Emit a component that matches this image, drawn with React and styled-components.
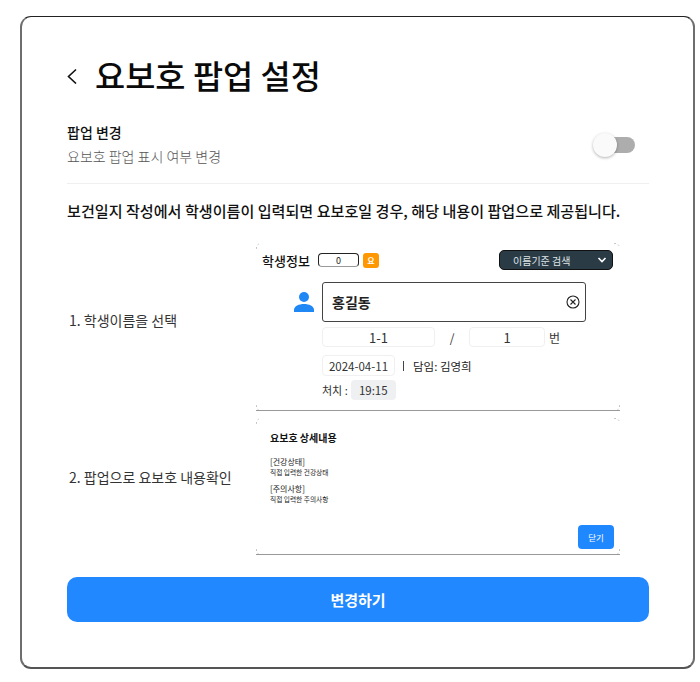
import React from "react";
import styled, { createGlobalStyle } from "styled-components";

const Global = createGlobalStyle`
  html, body { margin: 0; padding: 0; background: #fff; }
  body { font-family: "Noto Sans CJK KR", "Noto Sans", sans-serif; color: #111; }
`;

const Page = styled.div`
  width: 700px;
  height: 682px;
  padding: 16px 5px 13px 20px;
  box-sizing: border-box;
`;
const Card = styled.main`
  height: 100%;
  box-sizing: border-box;
  border: 1px solid #222;
  border-left: 2px solid #6e6e6e;
  border-right: 2px solid #6e6e6e;
  border-bottom: 2px solid #555;
  border-radius: 11px;
  padding: 34px 44px 0 45px;
  display: flex;
  flex-direction: column;
`;
const Header = styled.header`
  display: flex;
  align-items: center;
  height: 48px;
  gap: 17px;
`;
const BackIcon = styled.svg`
  width: 11px;
  height: 18px;
  fill: none;
  stroke: #111;
  stroke-width: 1.6;
`;
const Title = styled.h1`
  margin: 0;
  font-size: 32.8px;
  line-height: 48px;
  font-weight: 500;
  color: #0a0a0a;
`;
const ToggleRow = styled.section`
  display: flex;
  align-items: center;
  justify-content: space-between;
  margin-top: 22px;
  height: 45px;
`;
const ToggleText = styled.div`
  display: flex;
  flex-direction: column;
  gap: 4px;
`;
const ToggleTitle = styled.div`
  font-size: 14px;
  line-height: 20px;
  font-weight: 500;
  color: #111;
`;
const ToggleSub = styled.div`
  font-size: 14px;
  line-height: 20px;
  font-weight: 300;
  color: #555;
`;
const Switch = styled.div`
  position: relative;
  width: 37px;
  height: 16px;
  margin: 3px 14px 0 0;
  border-radius: 8px;
  background: #adadad;
`;
const Thumb = styled.span`
  position: absolute;
  left: -5px;
  top: -4px;
  width: 24px;
  height: 24px;
  border-radius: 50%;
  background: #fafafa;
  box-shadow: 0 1px 3px rgba(0, 0, 0, 0.3);
`;
const Divider = styled.hr`
  margin: 17px 0 0;
  border: 0;
  height: 1px;
  background: #efefef;
`;
const Notice = styled.p`
  margin: 15px 0 0;
  font-size: 15.1px;
  line-height: 23px;
  font-weight: 500;
  white-space: nowrap;
  color: #111;
`;
const GuideRow = styled.section`
  display: grid;
  grid-template-columns: 189px 364px;
  align-items: center;
  margin-top: ${(p) => p.$top}px;
`;
const GuideLabel = styled.div`
  font-size: 14px;
  line-height: 20px;
  font-weight: 400;
  color: #333;
  padding-left: 2px;
  padding-bottom: ${(p) => p.$pb}px;
`;
const Preview = styled.div`
  position: relative;
  height: ${(p) => p.$h}px;
  box-sizing: border-box;
  border-bottom: 1px solid #999;
`;
const Corner = styled.svg`
  position: absolute;
  width: 6px;
  height: 6px;
  fill: none;
  stroke: #999;
  stroke-width: 1;
  stroke-dasharray: 1 3;
  ${(p) => (p.$top ? "top: 0;" : "bottom: -1px;")}
  ${(p) => (p.$left ? "left: 0;" : "right: 0;")}
`;
const PreviewBody = styled.div`
  display: flex;
  flex-direction: column;
`;
const InfoBar = styled.div`
  display: flex;
  align-items: center;
  padding: 7px 7px 0 6px;
  height: 20px;
`;
const InfoTitle = styled.span`
  font-size: 13px;
  font-weight: 500;
  color: #111;
  width: 56px;
`;
const CountPill = styled.span`
  display: flex;
  align-items: center;
  justify-content: center;
  width: 41px;
  height: 14px;
  box-sizing: border-box;
  border: 1px solid #222;
  border-bottom-color: #999;
  border-radius: 4px;
  font-size: 9px;
  color: #222;
`;
const Badge = styled.span`
  display: flex;
  align-items: center;
  justify-content: center;
  margin-left: 4px;
  width: 16px;
  height: 15px;
  border-radius: 3px;
  background: #ff9800;
  color: #fff;
  font-size: 8px;
  font-weight: 700;
`;
const SearchSelect = styled.div`
  display: flex;
  align-items: center;
  justify-content: space-between;
  margin-left: auto;
  width: 114px;
  height: 20px;
  box-sizing: border-box;
  border: 1px solid #111;
  border-radius: 5px;
  background: #2a3b46;
  color: #dfe5e8;
  font-size: 10px;
  padding: 0 5px 0 13px;
`;
const SelectChevron = styled.svg`
  width: 10px;
  height: 8px;
  fill: none;
  stroke: #fff;
  stroke-width: 1.6;
`;
const NameRow = styled.div`
  display: flex;
  align-items: center;
  margin-top: 12px;
`;
const PersonIcon = styled.svg`
  width: 22px;
  height: 22px;
  fill: #2088f5;
  margin-left: 37px;
`;
const NameInput = styled.div`
  display: flex;
  align-items: center;
  justify-content: space-between;
  margin-left: 7px;
  width: 264px;
  height: 40px;
  box-sizing: border-box;
  border: 1px solid #444;
  border-radius: 3px;
  padding: 0 5px 0 9px;
  font-size: 14px;
  font-weight: 700;
  color: #222;
`;
const ClearIcon = styled.svg`
  width: 14px;
  height: 14px;
  fill: none;
  stroke: #222;
  stroke-width: 1.1;
`;
const ClassRow = styled.div`
  display: flex;
  align-items: center;
  margin: 5px 0 0 66px;
  font-size: 12px;
  color: #333;
`;
const FieldBox = styled.span`
  display: flex;
  align-items: center;
  justify-content: center;
  width: ${(p) => p.$w}px;
  height: ${(p) => p.$h}px;
  box-sizing: border-box;
  border: 1px solid #f0f0f0;
  border-radius: 4px;
  font-size: ${(p) => p.$size}px;
  color: #333;
`;
const Slash = styled.span`
  width: 34px;
  text-align: center;
`;
const Unit = styled.span`
  margin-left: 4px;
`;
const DateRow = styled.div`
  display: flex;
  align-items: center;
  margin: 8px 0 0 66px;
  font-size: 11.5px;
  color: #222;
`;
const Sep = styled.span`
  margin: 0 9px 0 8px;
  width: 1px;
  height: 10px;
  background: #444;
`;
const TreatRow = styled.div`
  display: flex;
  align-items: center;
  gap: 3px;
  margin: 4px 0 0 66px;
  font-size: 11px;
  color: #333;
`;
const TimeChip = styled.span`
  display: flex;
  align-items: center;
  justify-content: center;
  width: 45px;
  height: 20px;
  border-radius: 4px;
  background: #eef0f2;
  font-size: 11.5px;
`;
const PopupBody = styled.div`
  display: flex;
  flex-direction: column;
  height: 100%;
  padding: 13px 6px 5px 14px;
  box-sizing: border-box;
`;
const PopupTitle = styled.div`
  font-size: 10px;
  line-height: 14px;
  font-weight: 700;
  color: #111;
`;
const PopupHead = styled.div`
  margin-top: ${(p) => p.$top}px;
  font-size: 8px;
  line-height: 10px;
  color: #222;
`;
const PopupLine = styled.div`
  margin-top: 1px;
  font-size: 6.7px;
  line-height: 9px;
  color: #222;
`;
const CloseButton = styled.button`
  align-self: flex-end;
  margin-top: auto;
  width: 36px;
  height: 24px;
  border: 0;
  border-radius: 4px;
  padding: 0;
  background: #2088ff;
  color: #fff;
  font-family: inherit;
  font-size: 8.5px;
`;
const SubmitButton = styled.button`
  margin-top: 22px;
  width: 100%;
  height: 45px;
  border: 0;
  border-radius: 10px;
  background: #2288ff;
  color: #fff;
  font-family: inherit;
  font-size: 15px;
  font-weight: 700;
`;

const corners = (
  <>
    <Corner $top $left viewBox="0 0 6 6"><path d="M0.5 5.5Q0.5 0.5 5.5 0.5" /></Corner>
    <Corner $top viewBox="0 0 6 6"><path d="M0.5 0.5Q5.5 0.5 5.5 5.5" /></Corner>
    <Corner $left viewBox="0 0 6 6"><path d="M0.5 0.5Q0.5 5.5 5.5 5.5" /></Corner>
    <Corner viewBox="0 0 6 6"><path d="M5.5 0.5Q5.5 5.5 0.5 5.5" /></Corner>
  </>
);

export default function App() {
  return (
    <Page>
      <Global />
      <Card>
        <Header>
          <BackIcon viewBox="0 0 11 18"><path d="M9 3.5L1.5 10.5L9 17.5" /></BackIcon>
          <Title>요보호 팝업 설정</Title>
        </Header>
        <ToggleRow>
          <ToggleText>
            <ToggleTitle>팝업 변경</ToggleTitle>
            <ToggleSub>요보호 팝업 표시 여부 변경</ToggleSub>
          </ToggleText>
          <Switch><Thumb /></Switch>
        </ToggleRow>
        <Divider />
        <Notice>보건일지 작성에서 학생이름이 입력되면 요보호일 경우, 해당 내용이 팝업으로 제공됩니다.</Notice>
        <GuideRow $top={21}>
          <GuideLabel $pb={14}>1. 학생이름을 선택</GuideLabel>
          <Preview $h={168}>
            {corners}
            <PreviewBody>
              <InfoBar>
                <InfoTitle>학생정보</InfoTitle>
                <CountPill>0</CountPill>
                <Badge>요</Badge>
                <SearchSelect>
                  이름기준 검색
                  <SelectChevron viewBox="0 0 10 8"><path d="M1.5 2l3.5 3.5L8.5 2" /></SelectChevron>
                </SearchSelect>
              </InfoBar>
              <NameRow>
                <PersonIcon viewBox="0 0 22 22">
                  <circle cx="11" cy="6" r="5" />
                  <path d="M1 21v-2c0-4 5-6 10-6s10 2 10 6v2z" />
                </PersonIcon>
                <NameInput>
                  홍길동
                  <ClearIcon viewBox="0 0 14 14">
                    <circle cx="7" cy="7" r="6" />
                    <path d="M4.5 4.5l5 5M9.5 4.5l-5 5" />
                  </ClearIcon>
                </NameInput>
              </NameRow>
              <ClassRow>
                <FieldBox $w={113} $h={20} $size={13}>1-1</FieldBox>
                <Slash>/</Slash>
                <FieldBox $w={76} $h={20} $size={13}>1</FieldBox>
                <Unit>번</Unit>
              </ClassRow>
              <DateRow>
                <FieldBox $w={73} $h={21} $size={11.5}>2024-04-11</FieldBox>
                <Sep />
                담임: 김영희
              </DateRow>
              <TreatRow>
                처치 :<TimeChip>19:15</TimeChip>
              </TreatRow>
            </PreviewBody>
          </Preview>
        </GuideRow>
        <GuideRow $top={7}>
          <GuideLabel $pb={20}>2. 팝업으로 요보호 내용확인</GuideLabel>
          <Preview $h={137}>
            {corners}
            <PopupBody>
              <PopupTitle>요보호 상세내용</PopupTitle>
              <PopupHead $top={12}>[건강상태]</PopupHead>
              <PopupLine>직접 입력한 건강상태</PopupLine>
              <PopupHead $top={7}>[주의사항]</PopupHead>
              <PopupLine>직접 입력한 주의사항</PopupLine>
              <CloseButton>닫기</CloseButton>
            </PopupBody>
          </Preview>
        </GuideRow>
        <SubmitButton>변경하기</SubmitButton>
      </Card>
    </Page>
  );
}
